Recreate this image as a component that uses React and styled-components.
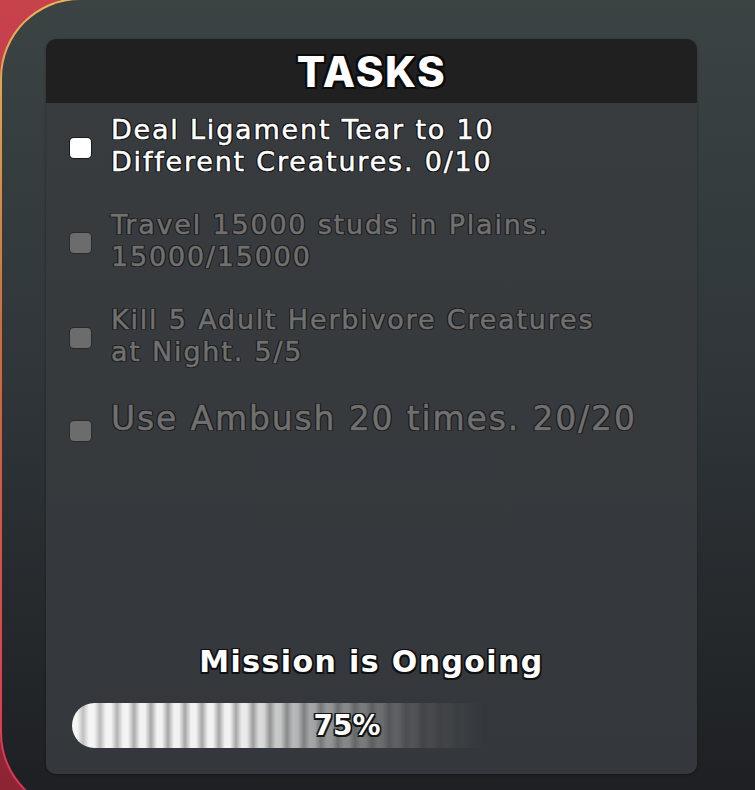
import React from "react";
import styled, { createGlobalStyle } from "styled-components";

const tasks = [
  { lines: ["Deal Ligament Tear to 10", "Different Creatures. 0/10"], done: false },
  { lines: ["Travel 15000 studs in Plains.", "15000/15000"], done: true },
  { lines: ["Kill 5 Adult Herbivore Creatures", "at Night. 5/5"], done: true },
  { lines: ["Use Ambush 20 times. 20/20"], done: true, big: true },
];

const progress = 75;

const outline = (c, w) =>
  `${w}px 0 0 ${c}, -${w}px 0 0 ${c}, 0 ${w}px 0 ${c}, 0 -${w}px 0 ${c},
   ${w}px ${w}px 0 ${c}, -${w}px ${w}px 0 ${c}, ${w}px -${w}px 0 ${c}, -${w}px -${w}px 0 ${c}`;

const GlobalStyle = createGlobalStyle`
  html, body {
    margin: 0;
    padding: 0;
    overflow: hidden;
  }
  body {
    width: 755px;
    height: 790px;
    background: linear-gradient(to bottom, #c8424c 0%, #a8303c 60%, #8c2434 100%);
    font-family: "DejaVu Sans", "Noto Sans", sans-serif;
  }
`;

const Border = styled.div`
  margin-top: -2px;
  height: 815px;
  padding: 2px 0 2px 2px;
  border-radius: 80px 0 0 80px;
  background: linear-gradient(to bottom, #e8b65a 0%, #c9703c 40%, #e0305c 100%);
  box-sizing: border-box;
`;

const Frame = styled.div`
  height: 100%;
  border-radius: 78px 0 0 78px;
  background: linear-gradient(to bottom, #3b4343 0%, #30363a 45%, #1d1f22 100%);
  padding: 39px 0 0 44px;
  box-sizing: border-box;
`;

const Card = styled.div`
  width: 651px;
  height: 735px;
  border-radius: 10px;
  background: linear-gradient(to bottom, #393c3f 0%, #34373b 100%);
  box-shadow: 0 1px 3px rgba(0, 0, 0, 0.35);
  display: flex;
  flex-direction: column;
  overflow: hidden;
`;

const Header = styled.div`
  height: 64px;
  background: #202020;
  display: flex;
  align-items: center;
  justify-content: center;
`;

const Title = styled.h1`
  margin: 0;
  color: #fff;
  font-family: Inter, "DejaVu Sans", sans-serif;
  font-size: 42px;
  font-weight: 800;
  letter-spacing: 1.5px;
  text-shadow: ${outline("#0b0b0b", 2)};
`;

const List = styled.div`
  flex: 1;
  display: flex;
  flex-direction: column;
`;

const Row = styled.div`
  height: 95px;
  padding: 0 0 9px 24px;
  box-sizing: border-box;
  display: flex;
  align-items: center;
  gap: 20px;
`;

const Box = styled.div`
  width: 21px;
  height: 20px;
  border-radius: 4px;
  flex: none;
  margin-top: ${(p) => (p.$big ? "0" : "4px")};
  background: ${(p) => (p.$done ? "#6c6c6c" : "#ffffff")};
  box-shadow: 0 0 0 1px ${(p) => (p.$done ? "#2a2a2a" : "#1a1a1a")};
`;

const Label = styled.div`
  color: ${(p) => (p.$done ? "#707070" : "#ffffff")};
  font-size: ${(p) => (p.$big ? "33px" : "27px")};
  letter-spacing: ${(p) => (p.$big ? "1.85px" : "1.8px")};
  line-height: ${(p) => (p.$big ? "38px" : "32px")};
  margin-bottom: ${(p) => (p.$big ? "24px" : "0")};
  white-space: nowrap;
  -webkit-text-stroke: 0.5px currentColor;
  text-shadow: ${(p) => outline(p.$done ? "#1e1e1e" : "#121212", 1.2)};
`;

const Footer = styled.div`
  display: flex;
  flex-direction: column;
  align-items: center;
  padding: 0 26px 26px;
`;

const Status = styled.div`
  color: #fff;
  font-size: 30px;
  font-weight: 700;
  letter-spacing: 1.4px;
  margin-bottom: 24px;
  text-shadow: ${outline("#111", 1.5)};
`;

const Track = styled.div`
  position: relative;
  width: 550px;
  height: 45px;
  align-self: flex-start;
`;

const Fill = styled.div`
  height: 100%;
  border-radius: 23px 0 0 23px;
  background:
    linear-gradient(
      to right,
      rgba(255, 255, 255, 0.35) 0%,
      rgba(255, 255, 255, 0) 18%,
      rgba(70, 72, 75, 0) 40%,
      rgba(70, 72, 75, 0.55) 62%,
      rgba(55, 58, 61, 0.9) 85%,
      rgba(52, 55, 59, 1) 100%
    ),
    repeating-linear-gradient(
      to right,
      #f2f2f2 0px,
      #f2f2f2 5px,
      #a6a6a6 11px,
      #f2f2f2 17px
    );
`;

const Percent = styled.div`
  position: absolute;
  inset: 0;
  display: flex;
  align-items: center;
  justify-content: center;
  color: #fff;
  font-size: 28px;
  font-weight: 700;
  text-shadow: ${outline("#151515", 1.5)};
`;

export default function App() {
  return (
    <>
      <GlobalStyle />
      <Border>
        <Frame>
          <Card>
            <Header>
              <Title>TASKS</Title>
            </Header>
            <List>
              {tasks.map((t, i) => (
                <Row key={i}>
                  <Box $done={t.done} $big={t.big} />
                  <Label $done={t.done} $big={t.big}>
                    {t.lines.map((l, j) => (
                      <div key={j}>{l}</div>
                    ))}
                  </Label>
                </Row>
              ))}
            </List>
            <Footer>
              <Status>Mission is Ongoing</Status>
              <Track>
                <Fill style={{ width: `${progress}%` }} />
                <Percent>{progress}%</Percent>
              </Track>
            </Footer>
          </Card>
        </Frame>
      </Border>
    </>
  );
}
